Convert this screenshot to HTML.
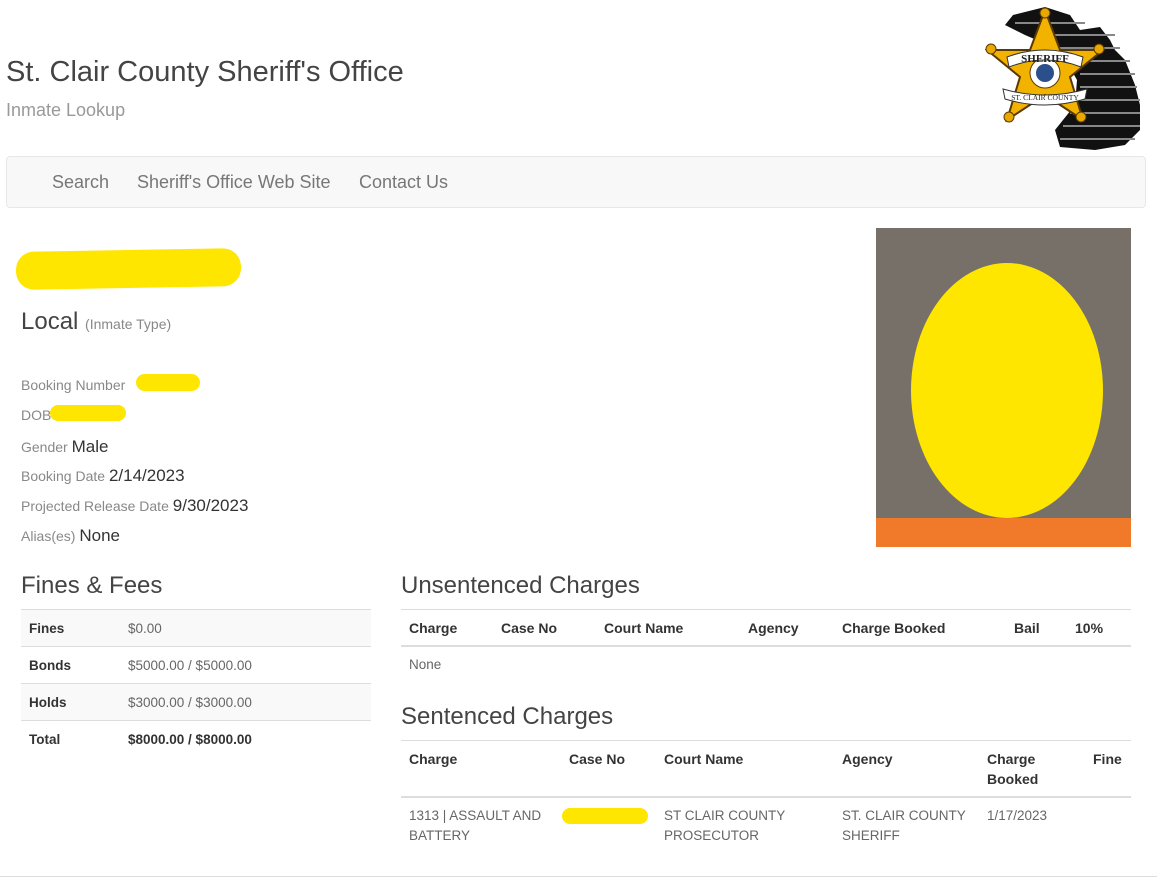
<!DOCTYPE html>
<html><head><meta charset="utf-8"><style>
*{margin:0;padding:0;box-sizing:border-box}
body{width:1157px;height:881px;background:#fff;font-family:"Liberation Sans",sans-serif;color:#333;position:relative;overflow:hidden}
.a{position:absolute;white-space:nowrap}
.lbl{font-size:14px;color:#888}
.val{font-size:17px;color:#333}
table{border-collapse:collapse;font-size:13.5px}
th{font-weight:bold;text-align:left;color:#333}
td{color:#666}
</style></head><body>
<div class="a" style="left:6px;top:56px;font-size:29px;color:#444">St. Clair County Sheriff's Office</div>
<div class="a" style="left:6px;top:100px;font-size:18px;color:#999">Inmate Lookup</div>
<svg class="a" style="left:985px;top:5px" width="160" height="148" viewBox="0 0 160 148">
<path d="M28 10 L60 2 L85 10 L95 25 L115 22 L125 35 L130 45 L140 55 L150 80 L155 100 L155 125 L140 140 L110 145 L75 142 L70 125 L90 100 L92 75 L75 45 L40 30 L20 20 Z" fill="#111"/>
<g stroke="#888" stroke-width="2">
<line x1="30" y1="18" x2="100" y2="18"/><line x1="50" y1="30" x2="130" y2="30"/><line x1="60" y1="43" x2="135" y2="43"/><line x1="90" y1="56" x2="145" y2="56"/><line x1="95" y1="69" x2="150" y2="69"/><line x1="95" y1="82" x2="152" y2="82"/><line x1="90" y1="95" x2="155" y2="95"/><line x1="85" y1="108" x2="155" y2="108"/><line x1="78" y1="121" x2="155" y2="121"/><line x1="75" y1="134" x2="150" y2="134"/></g>
<polygon points="60,5 75,45 118,45 85,72 98,115 60,90 22,115 35,72 2,45 45,45" fill="#f2b300" stroke="#5a3a00" stroke-width="2"/>
<g fill="#e8a800" stroke="#5a3a00"><circle cx="60" cy="8" r="5"/><circle cx="114" cy="44" r="5"/><circle cx="96" cy="112" r="5"/><circle cx="24" cy="112" r="5"/><circle cx="6" cy="44" r="5"/></g>
<circle cx="60" cy="68" r="15" fill="#fff" stroke="#5a3a00"/>
<circle cx="60" cy="68" r="9" fill="#2a4f8a"/>
<path d="M22 52 Q60 38 98 52 L96 62 Q60 48 24 62 Z" fill="#fff" stroke="#333"/>
<text x="60" y="57" font-size="11" text-anchor="middle" font-weight="bold" fill="#222" font-family="Liberation Serif">SHERIFF</text>
<path d="M18 84 Q60 96 102 84 L100 94 Q60 106 20 94 Z" fill="#fff" stroke="#333"/>
<text x="60" y="95" font-size="7.5" text-anchor="middle" fill="#222" font-family="Liberation Serif">ST. CLAIR COUNTY</text>
</svg>
<div class="a" style="left:6px;top:156px;width:1140px;height:52px;background:#f8f8f8;border:1px solid #e7e7e7;border-radius:4px"></div>
<div class="a" style="left:52px;top:172px;font-size:18px;color:#777">Search</div>
<div class="a" style="left:137px;top:172px;font-size:18px;color:#777">Sheriff's Office Web Site</div>
<div class="a" style="left:359px;top:172px;font-size:18px;color:#777">Contact Us</div>
<div class="a" style="left:16px;top:250px;width:225px;height:38px;background:#ffe600;border-radius:18px;transform:rotate(-1deg)"></div>
<div class="a" style="left:21px;top:308px;font-size:24px;color:#444">Local <span style="font-size:14px;color:#888">(Inmate Type)</span></div>
<div class="a lbl" style="left:21px;top:377px">Booking Number</div>
<div class="a" style="left:136px;top:374px;width:64px;height:17px;background:#ffe600;border-radius:9px"></div>
<div class="a lbl" style="left:21px;top:407px">DOB</div>
<div class="a" style="left:50px;top:405px;width:76px;height:16px;background:#ffe600;border-radius:8px"></div>
<div class="a lbl" style="left:21px;top:437px">Gender <span class="val">Male</span></div>
<div class="a lbl" style="left:21px;top:466px">Booking Date <span class="val">2/14/2023</span></div>
<div class="a lbl" style="left:21px;top:496px">Projected Release Date <span class="val">9/30/2023</span></div>
<div class="a lbl" style="left:21px;top:526px">Alias(es) <span class="val">None</span></div>
<div class="a" style="left:876px;top:228px;width:255px;height:319px;background:#777069;overflow:hidden">
<div style="position:absolute;left:0;top:290px;width:255px;height:40px;background:#f07a2a"></div>
<div style="position:absolute;left:35px;top:35px;width:192px;height:255px;background:#ffe600;border-radius:50%"></div>
</div>
<div class="a" style="left:21px;top:572px;font-size:24px;color:#444">Fines &amp; Fees</div>
<table class="a" style="left:21px;top:609px;width:350px">
<tr style="background:#f9f9f9;border-top:1px solid #ddd;height:37px"><th style="padding-left:8px;width:107px">Fines</th><td>$0.00</td></tr>
<tr style="border-top:1px solid #ddd;height:37px"><th style="padding-left:8px">Bonds</th><td>$5000.00 / $5000.00</td></tr>
<tr style="background:#f9f9f9;border-top:1px solid #ddd;height:37px"><th style="padding-left:8px">Holds</th><td>$3000.00 / $3000.00</td></tr>
<tr style="border-top:1px solid #ddd;height:37px"><th style="padding-left:8px">Total</th><td style="font-weight:bold;color:#333">$8000.00 / $8000.00</td></tr>
</table>
<div class="a" style="left:401px;top:572px;font-size:24px;color:#444">Unsentenced Charges</div>
<div class="a" style="left:401px;top:609px;width:730px;height:38px;border-top:1px solid #ddd;border-bottom:2px solid #ddd"></div>
<div class="a" style="left:409px;top:620px;font-size:14px;font-weight:bold">Charge</div>
<div class="a" style="left:501px;top:620px;font-size:14px;font-weight:bold">Case No</div>
<div class="a" style="left:604px;top:620px;font-size:14px;font-weight:bold">Court Name</div>
<div class="a" style="left:748px;top:620px;font-size:14px;font-weight:bold">Agency</div>
<div class="a" style="left:842px;top:620px;font-size:14px;font-weight:bold">Charge Booked</div>
<div class="a" style="left:1014px;top:620px;font-size:14px;font-weight:bold">Bail</div>
<div class="a" style="left:1075px;top:620px;font-size:14px;font-weight:bold">10%</div>
<div class="a" style="left:409px;top:657px;font-size:13.5px;color:#666">None</div>
<div class="a" style="left:401px;top:703px;font-size:24px;color:#444">Sentenced Charges</div>
<div class="a" style="left:401px;top:740px;width:730px;height:58px;border-top:1px solid #ddd;border-bottom:2px solid #ddd"></div>
<div class="a" style="left:409px;top:751px;font-size:14px;font-weight:bold">Charge</div>
<div class="a" style="left:569px;top:751px;font-size:14px;font-weight:bold">Case No</div>
<div class="a" style="left:664px;top:751px;font-size:14px;font-weight:bold">Court Name</div>
<div class="a" style="left:842px;top:751px;font-size:14px;font-weight:bold">Agency</div>
<div class="a" style="left:987px;top:749px;font-size:14px;font-weight:bold;line-height:20px;white-space:normal;width:60px">Charge Booked</div>
<div class="a" style="left:1093px;top:751px;font-size:14px;font-weight:bold">Fine</div>
<div class="a" style="left:409px;top:806px;font-size:13.5px;color:#666;line-height:20px">1313 | ASSAULT AND<br>BATTERY</div>
<div class="a" style="left:562px;top:808px;width:86px;height:16px;background:#ffe600;border-radius:8px"></div>
<div class="a" style="left:664px;top:806px;font-size:13.5px;color:#666;line-height:20px">ST CLAIR COUNTY<br>PROSECUTOR</div>
<div class="a" style="left:842px;top:806px;font-size:13.5px;color:#666;line-height:20px">ST. CLAIR COUNTY<br>SHERIFF</div>
<div class="a" style="left:987px;top:808px;font-size:13.5px;color:#666">1/17/2023</div>
<div class="a" style="left:0;top:876px;width:1157px;border-top:1px solid #ddd"></div>
</body></html>
